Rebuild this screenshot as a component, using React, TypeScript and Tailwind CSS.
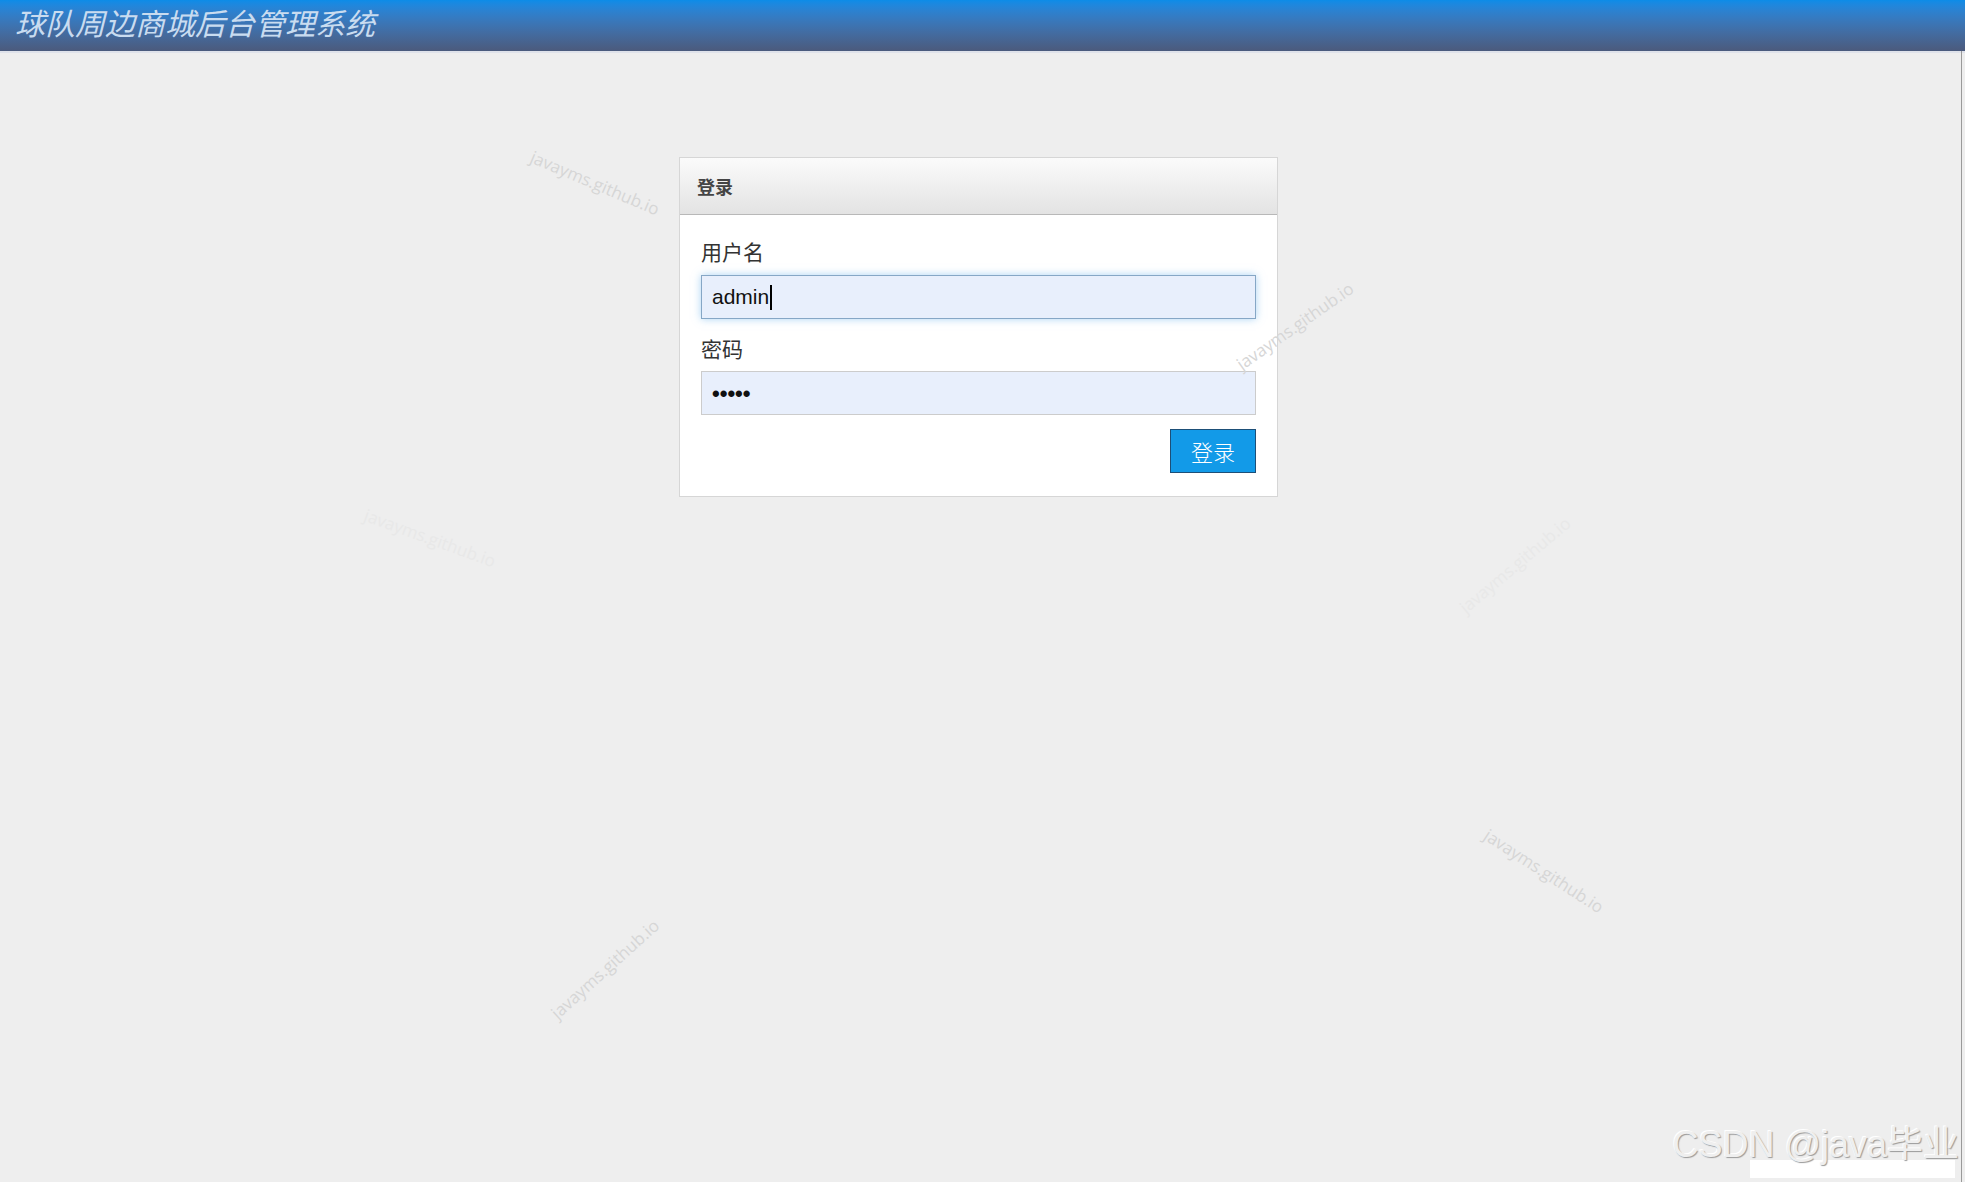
import React from "react";

const cjk = '"Noto Sans CJK SC", "Noto Sans", sans-serif';
const latin = '"Liberation Sans", "Noto Sans CJK SC", sans-serif';

function Watermark({ x, y, angle, faint }: { x: number; y: number; angle: number; faint?: boolean }) {
  return (
    <div
      className={`pointer-events-none absolute whitespace-nowrap text-[17px] ${faint ? "text-[#e8e8e8]" : "text-[#d6d6d6]"}`}
      style={{ left: x, top: y, transform: `translate(-50%, -50%) rotate(${angle}deg)`, fontFamily: '"Open Sans", sans-serif' }}
    >
      javayms.github.io
    </div>
  );
}

export default function App() {
  return (
    <div className="relative min-h-[1182px] w-full overflow-hidden bg-[#eeeeee]" style={{ fontFamily: cjk }}>
      <header className="flex h-[51px] items-center bg-gradient-to-b from-[#0b8ce8] to-[#4b5a7c] pl-[15px]">
        <h1 className="text-[30px] italic leading-none text-[#c9dcf0] -mt-[8px]" style={{ fontFamily: cjk }}>
          球队周边商城后台管理系统
        </h1>
      </header>
      <div className="h-[2px] bg-[#dfe2ea]" />

      <div className="pt-[104px] pl-[679px]">
        <div className="w-[599px] border border-[#d6d6d6] bg-white">
          <div className="flex h-[57px] items-center border-b border-[#b8b8b8] bg-gradient-to-b from-[#fbfbfb] to-[#e3e3e3] pl-[17px]">
            <span className="text-[18px] font-bold text-[#444]">登录</span>
          </div>
          <div className="flex flex-col px-[21px] pt-[21px] pb-[23px]">
            <label className="text-[21px] leading-[30px] text-[#333]">用户名</label>
            <div className="mt-[9px] flex h-[44px] items-center border border-[#86a7c6] bg-[#e8effc] pl-[10px] shadow-[0_0_8px_rgba(102,175,233,0.55)]">
              <span className="text-[21px] text-[#111]" style={{ fontFamily: latin }}>admin</span>
              <span className="ml-[1px] h-[25px] w-[2px] bg-black" />
            </div>
            <label className="mt-[14px] text-[21px] leading-[30px] text-[#333]">密码</label>
            <div className="mt-[8px] flex h-[44px] items-center border border-[#cccccc] bg-[#e8effc] pl-[10px]">
              <span className="text-[22px] font-bold text-[#111]" style={{ fontFamily: latin }}>•••••</span>
            </div>
            <div className="mt-[14px] flex justify-end">
              <button className="h-[44px] w-[86px] border border-[#1d4f78] bg-[#129ae8] text-[22px] font-light text-white" style={{ fontFamily: cjk }}>
                登录
              </button>
            </div>
          </div>
        </div>
      </div>

      <Watermark x={595} y={183} angle={23} />
      <Watermark x={1295} y={326} angle={-35} />
      <Watermark x={605} y={969} angle={-42} />
      <Watermark x={1544} y={871} angle={33} />
      <Watermark x={430} y={538} angle={20} faint />
      <Watermark x={1515} y={565} angle={-40} faint />

      <div className="absolute right-[3px] top-[51px] bottom-0 w-[1px] bg-[#9a9a9a]" />
      <div className="absolute bottom-[4px] right-[10px] h-[18px] w-[205px] bg-white" />
      <div
        className="absolute right-[6px] bottom-[10px] whitespace-nowrap text-[36px] text-[#efefef]"
        style={{ fontFamily: latin, textShadow: "1px 1px 1px #9a9a9a, -1px -1px 0 #ffffff" }}
      >
        CSDN @java毕业
      </div>
    </div>
  );
}
